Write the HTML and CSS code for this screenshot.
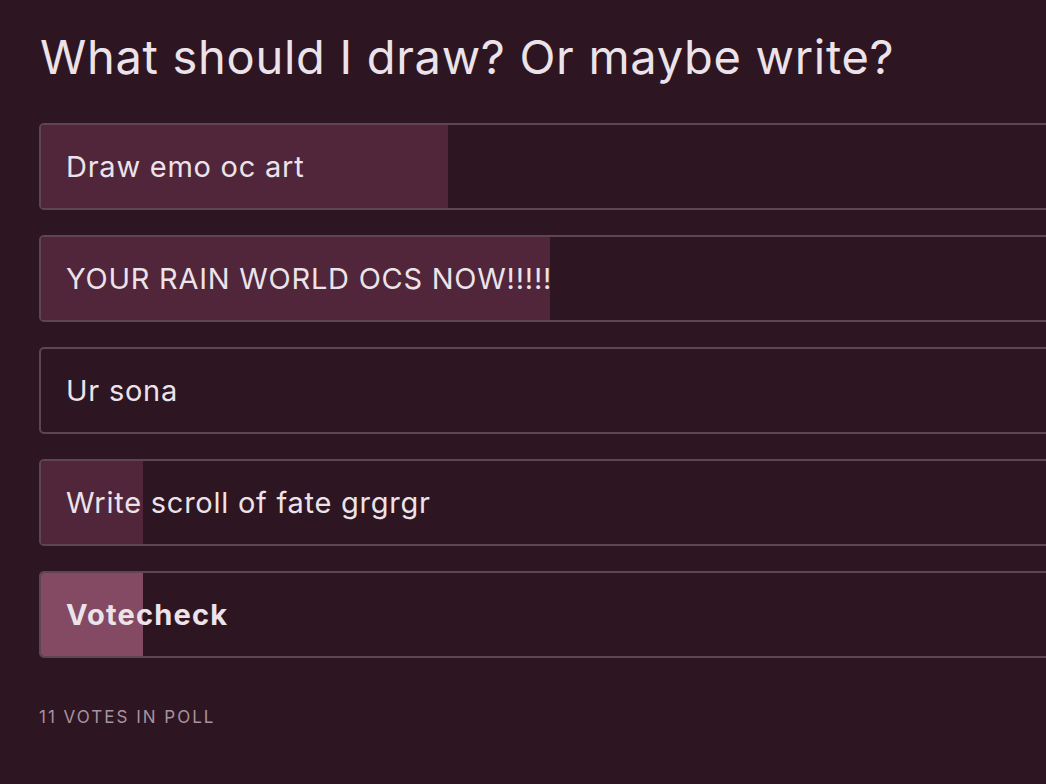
FILE: index.html
```html
<!DOCTYPE html>
<html>
<head>
<meta charset="utf-8">
<link rel="stylesheet" href="styles.css">
</head>
<body>
<div class="poll">
  <h1 class="poll-title">What should I draw? Or maybe write?</h1>
  <ul class="options">
    <li class="option"><div class="fill" style="width:36.36%"></div><span class="label">Draw emo oc art</span></li>
    <li class="option"><div class="fill" style="width:45.45%"></div><span class="label">YOUR RAIN WORLD OCS NOW!!!!!</span></li>
    <li class="option"><div class="fill" style="width:0%"></div><span class="label">Ur sona</span></li>
    <li class="option"><div class="fill" style="width:9.09%"></div><span class="label">Write scroll of fate grgrgr</span></li>
    <li class="option option-chosen"><div class="fill" style="width:9.09%"></div><span class="label">Votecheck</span></li>
  </ul>
  <div class="poll-meta">11 votes in poll</div>
</div>
</body>
</html>
```
FILE: styles.css
```css
html, body {
  margin: 0;
  padding: 0;
  background: #2e1522;
  overflow: hidden;
}
body {
  width: 1046px;
  height: 784px;
  font-family: "Inter", "Noto Sans", sans-serif;
  color: #ece3ea;
}
.poll {
  padding: 28px 0 0 39px;
  width: 1124px;
}
.poll-title {
  margin: 0 0 0 1px;
  font-size: 47px;
  font-weight: 400;
  line-height: 58px;
  letter-spacing: 0.7px;
}
.options {
  list-style: none;
  margin: 37px 0 0 0;
  padding: 0;
  display: flex;
  flex-direction: column;
  gap: 25px;
}
.option {
  position: relative;
  height: 87px;
  box-sizing: border-box;
  border: 2px solid #5d4553;
  border-radius: 5px;
  overflow: hidden;
  display: flex;
  align-items: center;
}
.fill {
  position: absolute;
  left: 0;
  top: 0;
  bottom: 0;
  background: #51263b;
}
.option-chosen .fill {
  background: #854a63;
}
.label {
  position: relative;
  padding-left: 25px;
  font-size: 29px;
  line-height: 1;
  letter-spacing: 0.75px;
}
.option-chosen .label {
  font-weight: 700;
  letter-spacing: 1.2px;
}
.poll-meta {
  margin-top: 49px;
  font-size: 17px;
  text-transform: uppercase;
  letter-spacing: 2px;
  color: #a8939f;
}
```
